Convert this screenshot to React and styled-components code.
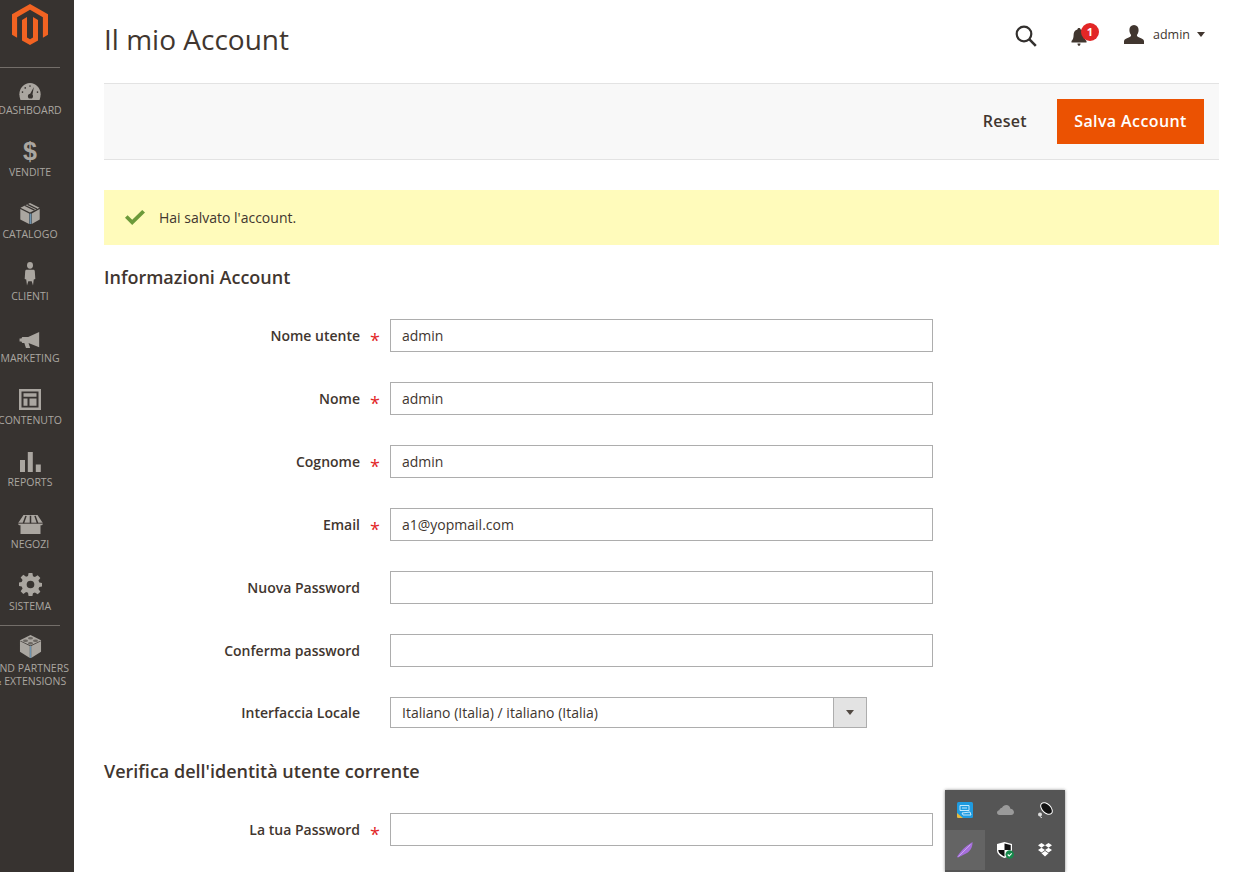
import styled, { createGlobalStyle } from "styled-components";

const GlobalStyle = createGlobalStyle`
  html, body {
    margin: 0;
    padding: 0;
    height: 872px;
    overflow: hidden;
    background: #fff;
  }
  * {
    box-sizing: border-box;
  }
`;

const icons = {
  dashboard: (
    <svg width="22" height="17" viewBox="0 0 24 18" preserveAspectRatio="none">
      <path fill="currentColor" d="M12 0C5.400 0 .4 5.600.4 12c0 2 .4 4 1.200 6h20.800c.8-2 1.200-4 1.200-6C23.600 5.600 18.600 0 12 0z" />
      <path fill="#373330" d="M16.200 4.200l-4 7.200c-1.500.1-2.500 1.200-2.500 2.600 0 1.100.5 1.800 1.100 2.300h3.400c.7-.6 1.100-1.300 1.100-2.300 0-.7-.2-1.300-.6-1.700z" />
      <circle cx="12" cy="3.200" r=".9" fill="#373330" />
      <circle cx="6.800" cy="5.200" r=".9" fill="#373330" />
      <circle cx="3.800" cy="9.600" r=".9" fill="#373330" />
      <circle cx="20.200" cy="9.600" r=".9" fill="#373330" />
    </svg>
  ),
  catalog: (
    <svg width="20" height="21" viewBox="0 0 20 21">
      <path fill="currentColor" d="M10 0l9.500 4.700L10 9.500.5 4.700z" />
      <path stroke="#373330" strokeWidth="1.300" fill="none" d="M5 2.500l9.500 4.700M7.500 1.300l9.500 4.700" />
      <path fill="currentColor" d="M.3 6l8.800 4.500V21L.3 16.500zM11.800 10.400l7.900-4.400v10.500L11.800 21z" />
      <path fill="#6d93ae" d="M9.500 10.600h1.900V21H9.500z" />
    </svg>
  ),
  customers: (
    <svg width="12" height="24" viewBox="0 0 14 25" preserveAspectRatio="none">
      <circle cx="7" cy="3.500" r="3.500" fill="currentColor" />
      <path fill="currentColor" d="M3 8h8c1 0 1.600.7 1.600 1.700l.6 8-1.800.6-.9 6.200-1.500-4.500H5l-1.500 4.500-.9-6.200-1.800-.6.600-8C1.400 8.700 2 8 3 8z" />
    </svg>
  ),
  marketing: (
    <svg width="22" height="16" viewBox="0 0 24 19" preserveAspectRatio="none">
      <path fill="currentColor" d="M22 0v18L11 13.500h-.6l1.800 5.500H7.600L5.800 13H3.500L2.600 11.400H.6V7.600h2L3.500 6H10z" />
    </svg>
  ),
  content: (
    <svg width="22" height="21" viewBox="0 0 22 22" preserveAspectRatio="none">
      <path fill="currentColor" fillRule="evenodd" d="M0 0h22v22H0zM2.500 2.500v17h17v-17zM4.500 4.500h13v3.500h-13zM4.500 10h4v7.500h-4zM10.500 10h7v7.500h-7z" />
    </svg>
  ),
  reports: (
    <svg width="21" height="20" viewBox="0 0 21 21" preserveAspectRatio="none">
      <path fill="currentColor" d="M0 8.500h5V21H0zM7.800 0h5v21h-5zM15.800 13h5v8h-5z" />
    </svg>
  ),
  stores: (
    <svg width="25" height="19" viewBox="0 0 25 22" preserveAspectRatio="none">
      <path fill="currentColor" d="M5.500 0h14L25 9.500c0 1.300-.7 2.500-2.500 2.500v10H2.500V12C.7 12 0 10.800 0 9.500z" />
      <path stroke="#373330" strokeWidth="1.500" fill="none" d="M8 1l-2.600 8.600M12.500 1v8.600M17 1l2.600 8.600" />
      <path stroke="#373330" strokeWidth="1" fill="none" d="M0 9.500h25" />
    </svg>
  ),
  system: (
    <svg width="23" height="23" viewBox="0 0 24 24">
      <path fill="currentColor" fillRule="evenodd" d="M10 0h4l.6 3.400 2 .8L19.500 2.300l2.800 2.800-2 2.800.9 2.100L24 10.500v3.500l-2.800.6-.9 2.100 2 2.800-2.800 2.800-2.900-2-2 .8L14 24h-4l-.6-3.400-2-.8-2.900 2L1.700 19l2-2.800-.9-2.100L0 13.500V10l2.800-.5.9-2.100-2-2.800 2.800-2.800 2.900 2 2-.8zM12 8a4 4 0 1 0 0 8 4 4 0 0 0 0-8z" />
    </svg>
  ),
  partners: (
    <svg width="23" height="23" viewBox="0 0 24 24">
      <path fill="currentColor" d="M12 0l11 5.500v12L12.700 24V11.400l10-5-.2-.4L12 11 1.500 6l-.2.4 10 5V24L1 17.500v-12z" />
      <path fill="#6d93ae" d="M11.300 11.400h1.400V24h-1.400z" />
      <ellipse cx="12" cy="3.400" rx="2.600" ry="1.300" fill="#373330" opacity=".55" />
      <ellipse cx="6.800" cy="6" rx="2.600" ry="1.300" fill="#373330" opacity=".55" />
      <ellipse cx="17.200" cy="6" rx="2.600" ry="1.300" fill="#373330" opacity=".55" />
      <ellipse cx="12" cy="8.600" rx="2.600" ry="1.300" fill="#373330" opacity=".55" />
    </svg>
  ),
};

const navItems = [
  { label: "DASHBOARD", icon: icons.dashboard },
  { label: "VENDITE", glyph: "$" },
  { label: "CATALOGO", icon: icons.catalog },
  { label: "CLIENTI", icon: icons.customers },
  { label: "MARKETING", icon: icons.marketing },
  { label: "CONTENUTO", icon: icons.content },
  { label: "REPORTS", icon: icons.reports },
  { label: "NEGOZI", icon: icons.stores },
  { label: "SISTEMA", icon: icons.system },
];

const fields = [
  { label: "Nome utente", value: "admin", required: true },
  { label: "Nome", value: "admin", required: true },
  { label: "Cognome", value: "admin", required: true },
  { label: "Email", value: "a1@yopmail.com", required: true },
  { label: "Nuova Password", value: "" },
  { label: "Conferma password", value: "" },
];

export default function App() {
  return (
    <Page>
      <GlobalStyle />
      <Sidebar>
        <LogoWrap>
          <svg width="36" height="41" viewBox="0 0 36 41">
            <path fill="#f26322" d="M18 0L0 10.300v20.500l5.100 3V13.300L18 5.800l12.900 7.500v20.500l5.100-3V10.300z" />
            <path fill="#f26322" d="M18 41l-8-4.600V15.900l5 -2.900v20.500l3 1.800 3-1.800V13l5 2.900v20.500z" />
          </svg>
        </LogoWrap>
        <NavDivider />
        <NavList>
          {navItems.map((item) => (
            <NavItem key={item.label}>
              <NavIcon>
                {item.glyph ? <DollarGlyph>{item.glyph}</DollarGlyph> : item.icon}
              </NavIcon>
              <NavLabel>{item.label}</NavLabel>
            </NavItem>
          ))}
        </NavList>
        <NavDivider />
        <PartnersItem>
          <NavIcon>{icons.partners}</NavIcon>
          <NavLabel>
            FIND PARTNERS
            <br />
            &amp; EXTENSIONS
          </NavLabel>
        </PartnersItem>
      </Sidebar>

      <Main>
        <TopBar>
          <PageTitle>Il mio Account</PageTitle>
          <TopActions>
            <SearchIcon aria-label="Cerca">
              <svg width="22" height="22" viewBox="0 0 22 22">
                <circle cx="9" cy="9" r="7.300" fill="none" stroke="#33302e" strokeWidth="2.200" />
                <path d="M14.200 14.200l6.600 6.600" stroke="#33302e" strokeWidth="2.600" />
              </svg>
            </SearchIcon>
            <BellWrap>
              <svg width="16" height="18" viewBox="0 0 16 18">
                <path fill="#41362f" d="M8 0c1 0 1.600.7 1.600 1.500C12.300 2.200 13.400 4.500 13.400 7c0 3 .8 4.700 2.100 6v1.500H.5V13c1.300-1.300 2.100-3 2.100-6 0-2.500 1.100-4.800 3.800-5.500C6.400.7 7 0 8 0zM6.500 15.500h3c0 1.500-.7 2.300-1.500 2.300s-1.500-.8-1.500-2.300z" />
              </svg>
              <Badge>1</Badge>
            </BellWrap>
            <UserMenu>
              <svg width="20" height="19" viewBox="0 0 20 19">
                <path fill="#41362f" d="M10 0c3 0 4.600 2.200 4.600 5 0 2-.7 3.700-1.700 5 0 1.300.7 1.900 2.400 2.600 2.500 1 4.400 1.800 4.700 3.400V19H0v-3c.3-1.600 2.200-2.400 4.700-3.400C6.400 11.900 7.100 11.300 7.100 10c-1-1.300-1.700-3-1.700-5C5.400 2.200 7 0 10 0z" />
              </svg>
              <UserName>admin</UserName>
              <Caret />
            </UserMenu>
          </TopActions>
        </TopBar>

        <ActionBar>
          <ResetButton>Reset</ResetButton>
          <SaveButton>Salva Account</SaveButton>
        </ActionBar>

        <Message>
          <svg width="20" height="15" viewBox="0 0 20 15">
            <path fill="#6c9a3a" d="M0 7.800l2.600-2.600 4.600 4.500L17.200 0 20 2.600 7.200 15z" />
          </svg>
          <span>Hai salvato l'account.</span>
        </Message>

        <SectionTitle>Informazioni Account</SectionTitle>
        <FormRows>
          {fields.map((field) => (
            <FieldRow key={field.label}>
              <FieldLabel>{field.label}</FieldLabel>
              <Star>{field.required ? "*" : ""}</Star>
              <TextInput readOnly value={field.value} />
            </FieldRow>
          ))}
          <FieldRow>
            <FieldLabel>Interfaccia Locale</FieldLabel>
            <Star />
            <SelectBox>
              <span>Italiano (Italia) / italiano (Italia)</span>
              <SelectArrow>
                <Caret $dark />
              </SelectArrow>
            </SelectBox>
          </FieldRow>
        </FormRows>

        <SecondTitle>Verifica dell'identità utente corrente</SecondTitle>
        <FieldRow>
          <FieldLabel>La tua Password</FieldLabel>
          <Star>*</Star>
          <TextInput readOnly value="" />
        </FieldRow>
      </Main>

      <TrayPopup>
        <TrayCell>
          <svg width="16" height="16" viewBox="0 0 16 16">
            <rect width="16" height="16" rx="1.500" fill="#1f9be0" />
            <path d="M0 11l6 5H1.500A1.500 1.500 0 0 1 0 14.500z" fill="#e8b93c" />
            <path d="M3 3.500h9v5H3zM5 11l8-1 1 3H6z" stroke="#d6f1ff" strokeWidth=".9" fill="none" />
            <path d="M5 6h5" stroke="#d6f1ff" strokeWidth=".9" />
          </svg>
        </TrayCell>
        <TrayCell>
          <svg width="17" height="10" viewBox="0 0 17 10">
            <path fill="#9a9a9a" d="M2.500 10C1 10 0 9 0 7.600 0 6.300 1 5.300 2.200 5.200 2.700 3.700 3.800 2.800 5 2.700 6 1 7.500 0 9.200 0c2.200 0 3.900 1.500 4.200 3.700 1.900.1 3.600 1.700 3.600 3.600C17 8.900 15.700 10 14.300 10z" />
          </svg>
        </TrayCell>
        <TrayCell>
          <svg width="16" height="16" viewBox="0 0 16 16">
            <ellipse cx="9.500" cy="6.500" rx="4.300" ry="7" transform="rotate(-45 9.500 6.500)" fill="#111" stroke="#fff" strokeWidth="1" />
            <circle cx="3" cy="12.500" r="2" fill="#ddd" />
            <path d="M3 14.500l2 1.500" stroke="#ddd" strokeWidth="1" />
          </svg>
        </TrayCell>
        <TrayCell $active>
          <svg width="16" height="16" viewBox="0 0 16 16">
            <path fill="#a66fdc" d="M15.500 0C15.800 5 13 10.500 7 12.500L1 15.500 0 15c1-2 2.500-4 4.500-6.300C7.500 5.500 11.500 2.500 15.500 0z" />
            <path stroke="#d9bdf5" strokeWidth=".7" d="M13.500 2.500L1.500 14.500" />
          </svg>
        </TrayCell>
        <TrayCell>
          <svg width="17" height="17" viewBox="0 0 17 17">
            <path fill="#fff" d="M7.500 0L15 2v6.500c0 3.500-3.500 6-7.500 7.500C3.500 14.500 0 12 0 8.500V2z" />
            <path fill="#111" d="M7.500 1.400V8h6.200V2.900zM7.500 8v6.400C6 14 1.300 11.500 1.300 8z" />
            <circle cx="12.700" cy="12.500" r="4.200" fill="#16894b" />
            <path d="M10.700 12.500l1.500 1.500 2.500-2.700" stroke="#fff" strokeWidth="1.100" fill="none" />
          </svg>
        </TrayCell>
        <TrayCell>
          <svg width="16" height="14" viewBox="0 0 16 14">
            <path fill="#fff" d="M4.500 0L8 2.300 4.500 4.700 1 2.300zM11.500 0L15 2.300l-3.500 2.400L8 2.300zM4.500 4.700L8 7.100 4.500 9.500 1 7.100zM11.500 4.700L15 7.100l-3.500 2.400L8 7.100zM8 8l3.500 2.300L8 13.500l-3.500-3.200z" />
          </svg>
        </TrayCell>
      </TrayPopup>
    </Page>
  );
}

const Page = styled.div`
  display: flex;
  width: 1242px;
  height: 872px;
  overflow: hidden;
  position: relative;
  font-family: "Open Sans", "Liberation Sans", sans-serif;
  color: #41362f;
`;

const Sidebar = styled.aside`
  flex: 0 0 74px;
  height: 872px;
  background: #373330;
  color: #aaa6a0;
`;

const LogoWrap = styled.div`
  width: 60px;
  height: 67px;
  display: flex;
  justify-content: center;
  padding-top: 4px;
`;

const NavDivider = styled.div`
  width: 60px;
  height: 1px;
  background: #736e69;
`;

const NavList = styled.div`
  display: flex;
  flex-direction: column;
  gap: 8px;
  padding-top: 7px;
`;

const NavItem = styled.div`
  width: 60px;
  height: 54px;
  display: flex;
  flex-direction: column;
  align-items: center;
`;

const PartnersItem = styled(NavItem)`
  padding-top: 9px;
`;

const NavIcon = styled.div`
  height: 26px;
  padding-bottom: 1px;
  display: flex;
  align-items: flex-end;
  justify-content: center;
`;

const DollarGlyph = styled.span`
  margin-bottom: -2px;
  font-family: "Liberation Sans", sans-serif;
  font-size: 25px;
  font-weight: 700;
  line-height: 25px;
`;

const NavLabel = styled.div`
  margin-top: 3px;
  font-size: 10.5px;
  line-height: 13px;
  text-align: center;
  white-space: nowrap;
`;

const Main = styled.main`
  flex: 1;
  min-width: 0;
  padding: 0 23px 0 30px;
`;

const TopBar = styled.header`
  height: 83px;
  display: flex;
  justify-content: space-between;
  align-items: flex-start;
`;

const PageTitle = styled.h1`
  margin: 19px 0 0;
  font-size: 28px;
  line-height: 40px;
  font-weight: 400;
  color: #41362f;
`;

const TopActions = styled.div`
  display: flex;
  align-items: center;
  height: 68px;
`;

const SearchIcon = styled.div`
  display: flex;
  margin: 4px 34px 0 0;
`;

const BellWrap = styled.div`
  position: relative;
  display: flex;
  margin: 6px 37px 0 0;
`;

const Badge = styled.span`
  position: absolute;
  top: -5px;
  left: 10px;
  width: 18px;
  height: 18px;
  border-radius: 50%;
  background: #e22626;
  color: #fff;
  font-size: 11px;
  font-weight: 700;
  line-height: 18px;
  text-align: center;
`;

const UserMenu = styled.div`
  display: flex;
  align-items: center;
  margin-right: 14px;
`;

const UserName = styled.span`
  margin: 0 7px 0 9px;
  font-size: 12.5px;
  color: #41362f;
`;

const Caret = styled.span`
  width: 0;
  height: 0;
  border-left: 4px solid transparent;
  border-right: 4px solid transparent;
  border-top: 5px solid ${(p) => (p.$dark ? "#514943" : "#41362f")};
`;

const ActionBar = styled.div`
  height: 77px;
  background: #f8f8f8;
  border-top: 1px solid #e3e3e3;
  border-bottom: 1px solid #e3e3e3;
  display: flex;
  align-items: center;
  justify-content: flex-end;
  padding-right: 15px;
`;

const ResetButton = styled.span`
  margin: -2px 30px 0 0;
  font-size: 16px;
  font-weight: 600;
  letter-spacing: 0.3px;
  color: #41362f;
`;

const SaveButton = styled.span`
  width: 147px;
  height: 45px;
  padding-bottom: 2px;
  background: #eb5202;
  color: #fff;
  font-size: 16px;
  font-weight: 600;
  letter-spacing: 0.4px;
  display: flex;
  align-items: center;
  justify-content: center;
`;

const Message = styled.div`
  margin-top: 30px;
  height: 55px;
  background: #fffbbb;
  display: flex;
  align-items: center;
  gap: 14px;
  padding-left: 21px;
  font-size: 14px;
  color: #41362f;
`;

const SectionTitle = styled.h2`
  margin: 20px 0 29px;
  font-size: 18px;
  line-height: 25px;
  font-weight: 600;
  color: #41362f;
`;

const SecondTitle = styled(SectionTitle)`
  margin: 31px 0 29px;
`;

const FormRows = styled.div`
  display: flex;
  flex-direction: column;
  gap: 30px;
`;

const FieldRow = styled.div`
  display: flex;
  align-items: center;
`;

const FieldLabel = styled.label`
  width: 256px;
  font-size: 14px;
  font-weight: 600;
  text-align: right;
  color: #41362f;
`;

const Star = styled.span`
  width: 30px;
  height: 14px;
  margin-top: 4px;
  padding-left: 10px;
  color: #e22626;
  font-size: 18px;
  font-weight: 400;
  line-height: 18px;
`;

const TextInput = styled.input`
  width: 543px;
  height: 33px;
  border: 1px solid #adadad;
  border-radius: 0;
  outline: none;
  padding: 0 11px;
  font-family: inherit;
  font-size: 14px;
  color: #41362f;
  background: #fff;
`;

const SelectBox = styled.div`
  width: 477px;
  height: 31px;
  border: 1px solid #adadad;
  display: flex;
  align-items: center;
  justify-content: space-between;
  padding-left: 11px;
  font-size: 14px;
  color: #41362f;
`;

const SelectArrow = styled.div`
  width: 33px;
  height: 29px;
  border-left: 1px solid #adadad;
  background: #e3e3e3;
  display: flex;
  align-items: center;
  justify-content: center;
`;

const TrayPopup = styled.div`
  position: absolute;
  left: 945px;
  top: 790px;
  width: 120px;
  height: 82px;
  background: #555555;
  box-shadow: 0 0 3px rgba(0, 0, 0, 0.45);
  display: grid;
  grid-template-columns: repeat(3, 40px);
  grid-auto-rows: 40px;
`;

const TrayCell = styled.div`
  display: flex;
  align-items: center;
  justify-content: center;
  background: ${(p) => (p.$active ? "#646464" : "transparent")};
`;
